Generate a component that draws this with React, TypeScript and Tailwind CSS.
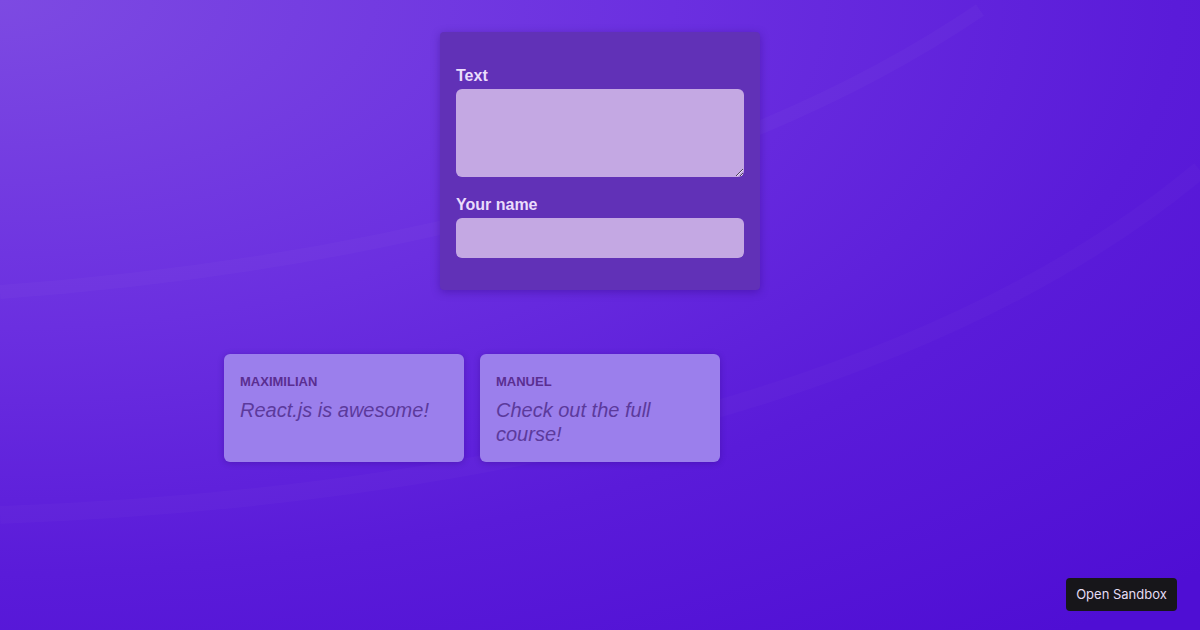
import React from "react";

export default function App() {
  const posts = [
    { author: "Maximilian", body: "React.js is awesome!" },
    { author: "Manuel", body: "Check out the full course!" },
  ];
  return (
    <div
      className="relative h-[630px] w-full overflow-hidden bg-[radial-gradient(ellipse_140%_130%_at_0%_0%,#7d4ae2_0%,#6b2fe0_40%,#5a1bd9_70%,#4f0ed4_100%)]"
      style={{ fontFamily: '"Liberation Sans", Arial, sans-serif' }}
    >
      <svg className="pointer-events-none absolute inset-0" width="1200" height="630" viewBox="0 0 1200 630" fill="none">
        <path d="M0 292 C 300 270, 700 200, 980 10" stroke="#ffffff" strokeOpacity="0.025" strokeWidth="14" />
        <path d="M0 515 C 400 500, 900 420, 1200 170" stroke="#ffffff" strokeOpacity="0.02" strokeWidth="18" />
      </svg>
      <div className="relative">
        <form className="mx-auto mt-8 w-[320px] rounded bg-[#6131b7] px-4 py-4 shadow-[0_2px_8px_rgba(40,0,110,0.35)]">
          <p className="my-4">
            <label className="mb-px block text-base font-bold leading-6 text-[#eadcfc]">Text</label>
            <textarea className="block h-[88px] w-full resize-y rounded-md bg-[#c4a8e3] outline-none" />
          </p>
          <p className="my-4">
            <label className="mb-px block text-base font-bold leading-6 text-[#eadcfc]">Your name</label>
            <input type="text" className="block h-10 w-full rounded-md bg-[#c4a8e3] outline-none" />
          </p>
        </form>
        <ul className="mx-auto mt-[64px] grid w-[752px] grid-cols-3 gap-4">
          {posts.map((p) => (
            <li key={p.author} className="rounded-md bg-[#9b7fec] p-4 shadow-[0_1px_6px_rgba(40,0,110,0.3)]">
              <p className="pt-[2px] text-[13px] font-bold uppercase leading-5 text-[#5a2e91]">{p.author}</p>
              <p className="mt-[6px] text-xl italic leading-6 text-[#5c3a9c]">{p.body}</p>
            </li>
          ))}
        </ul>
      </div>
      <button
        className="absolute bottom-[19px] right-[23px] h-[33px] w-[111px] rounded bg-[#17161a] text-[13px] text-[#e4dcf4]"
        style={{ fontFamily: "Inter, sans-serif" }}
      >
        Open Sandbox
      </button>
    </div>
  );
}
